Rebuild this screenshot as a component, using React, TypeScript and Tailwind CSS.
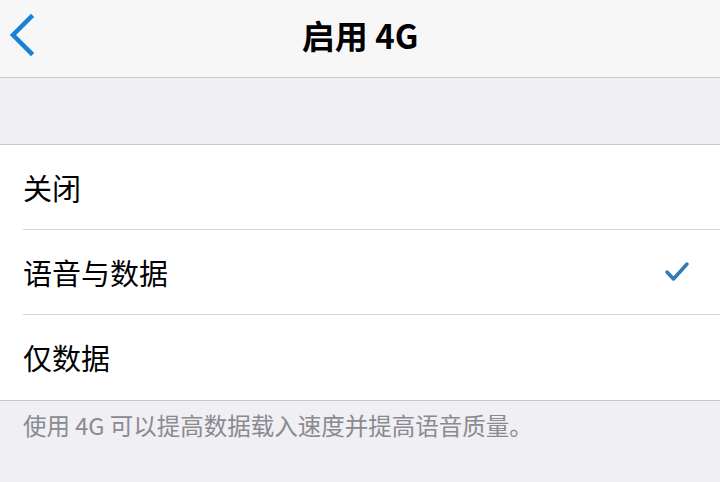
const rows = [
  { label: "关闭", checked: false },
  { label: "语音与数据", checked: true },
  { label: "仅数据", checked: false },
];

export default function App() {
  return (
    <div className="flex h-[482px] w-[720px] flex-col overflow-hidden bg-[#efeff4] font-['Noto_Sans_CJK_SC',sans-serif]">
      <header className="relative flex h-[78px] shrink-0 items-center justify-center border-b border-[#c8c7cc] bg-[#f7f7f8]">
        <button className="absolute left-[8px] top-[13px] text-[#1a7fd6]">
          <svg width="28" height="44" viewBox="0 0 28 44" fill="none" stroke="currentColor" strokeWidth="4.5" strokeLinecap="square">
            <path d="M23 4 L5 22 L23 40" />
          </svg>
        </button>
        <h1 className="-mt-[6px] text-[33px] font-semibold leading-none text-black">启用 4G</h1>
      </header>
      <div className="h-[67px] shrink-0 border-b border-[#c8c7cc]" />
      <div className="shrink-0 border-b border-[#c8c7cc] bg-white">
        {rows.map((r, i) => (
          <div key={r.label} className="flex h-[85px] items-center pl-[23px]">
            <div className={`flex h-full flex-1 items-center pr-[30px] ${i < rows.length - 1 ? "border-b border-[#d9d4dc]" : ""}`}>
              <span className="flex-1 text-[29px] leading-none text-black">{r.label}</span>
              {r.checked && (
                <svg width="26" height="22" viewBox="0 0 26 22" fill="none" stroke="#2f7ab9" strokeWidth="3.5" strokeLinecap="round" strokeLinejoin="round">
                  <path d="M3 11 L9.5 18 L23 3" />
                </svg>
              )}
            </div>
          </div>
        ))}
      </div>
      <p className="px-[23px] pt-[13px] text-[23.5px] leading-none text-[#8a8a8f]">使用 4G 可以提高数据载入速度并提高语音质量。</p>
    </div>
  );
}
